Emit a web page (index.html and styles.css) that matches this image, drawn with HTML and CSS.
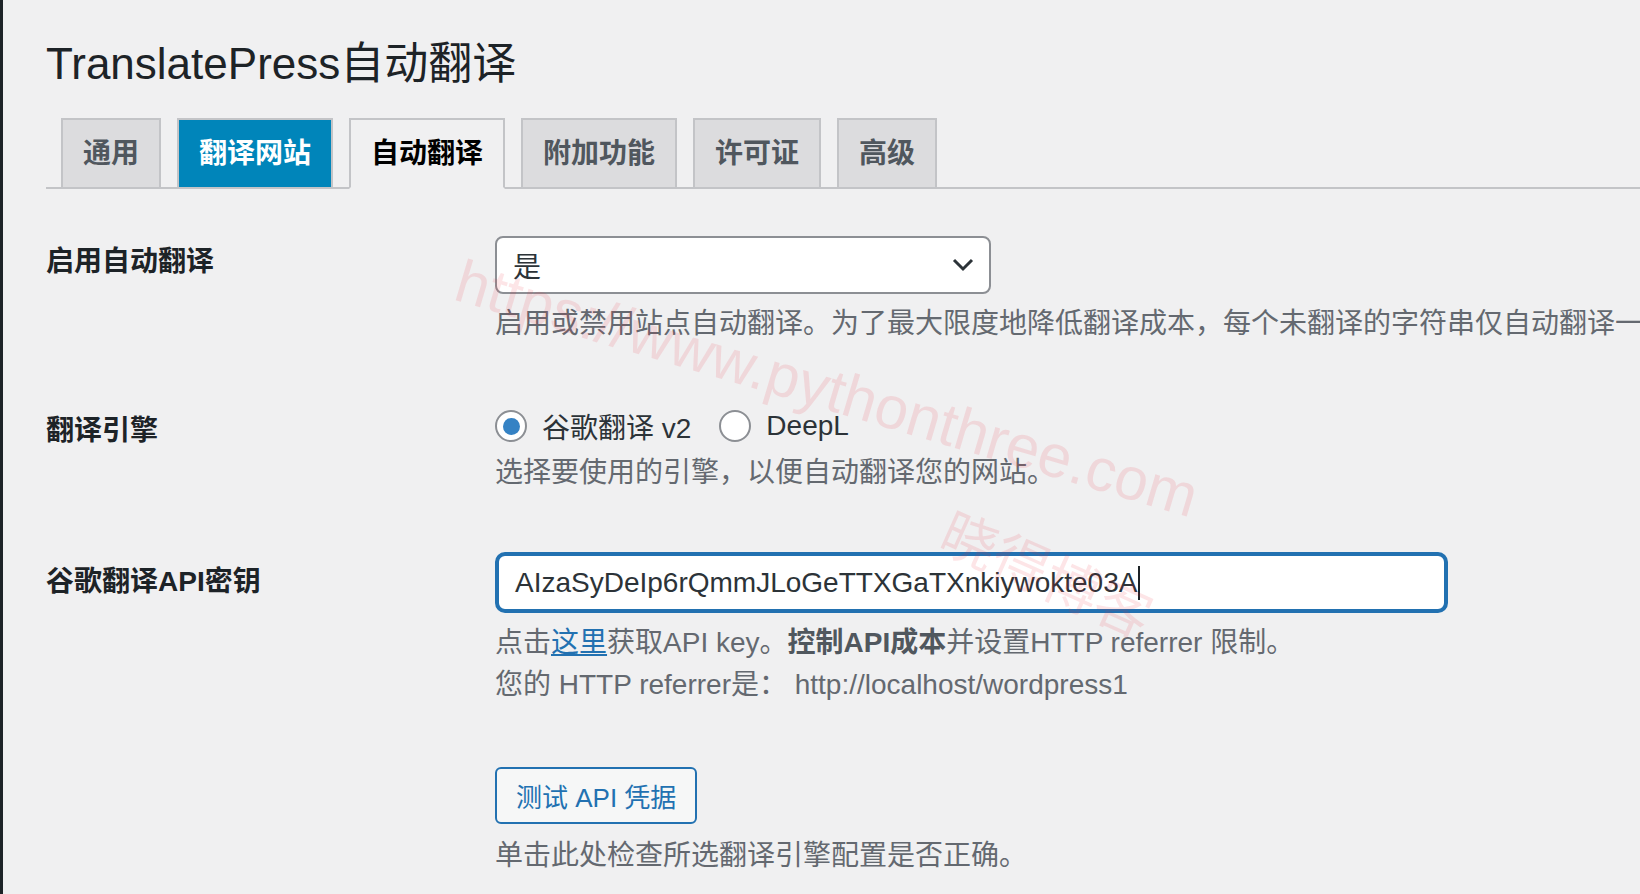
FILE: index.html
```html
<!DOCTYPE html>
<html lang="zh-CN">
<head>
  <meta charset="UTF-8" />
  <title>TranslatePress自动翻译</title>
  <link rel="stylesheet" href="styles.css">
</head>
<body>

<div class="page">
  <h1 class="page-title">TranslatePress自动翻译</h1>

  <nav class="tabs">
    <a class="tab">通用</a>
    <a class="tab tab-blue">翻译网站</a>
    <a class="tab tab-active">自动翻译</a>
    <a class="tab">附加功能</a>
    <a class="tab">许可证</a>
    <a class="tab">高级</a>
  </nav>

  <!-- Enable -->
  <div class="row row-enable">
    <div class="row-label">启用自动翻译</div>
    <div class="row-field">
      <div class="select">
        <span>是</span>
        <svg width="24" height="14" viewBox="0 0 24 14"><path d="M3 2 L12 11 L21 2" fill="none" stroke="#2c3338" stroke-width="3"/></svg>
      </div>
      <p class="desc">启用或禁用站点自动翻译。为了最大限度地降低翻译成本，每个未翻译的字符串仅自动翻译一次，然后存储在数据库中。</p>
    </div>
  </div>

  <!-- Engine -->
  <div class="row row-engine">
    <div class="row-label">翻译引擎</div>
    <div class="row-field">
      <div class="radios">
        <label class="radio-item"><span class="radio radio-checked"></span>谷歌翻译 v2</label>
        <label class="radio-item"><span class="radio"></span>DeepL</label>
      </div>
      <p class="desc desc-tight">选择要使用的引擎，以便自动翻译您的网站。</p>
    </div>
  </div>

  <!-- API key -->
  <div class="row row-key">
    <div class="row-label">谷歌翻译API密钥</div>
    <div class="row-field">
      <div class="text-input">AIzaSyDeIp6rQmmJLoGeTTXGaTXnkiywokte03A<span class="caret"></span></div>
      <p class="desc">点击<a href="#" class="link">这里</a>获取API key。<strong>控制API成本</strong>并设置HTTP referrer 限制。</p>
      <p class="desc desc-flat">您的 HTTP referrer是：&nbsp;http://localhost/wordpress1</p>

      <button class="test-btn">测试 API 凭据</button>
      <p class="desc desc-btn">单击此处检查所选翻译引擎配置是否正确。</p>
    </div>
  </div>
</div>

<div class="watermark watermark-url">https://www.pythonthree.com</div>
<div class="watermark watermark-name">晓得博客</div>

</body>
</html>
```

FILE: styles.css
```css
html, body {
  margin: 0;
  height: 100%;
  overflow: hidden;
}

body {
  background: #f0f0f1;
  font-family: "Liberation Sans", "Noto Sans CJK SC", sans-serif;
  color: #1d2327;
  position: relative;
}

.page {
  min-height: 100%;
  border-left: 3px solid #1d2327;
  padding-left: 43px;
  box-sizing: border-box;
}

.page-title {
  margin: 0;
  padding-top: 34px;
  font-size: 44px;
  font-weight: 400;
  line-height: 60px;
  color: #1d2327;
}

/* tabs */
.tabs {
  display: flex;
  gap: 16px;
  margin-top: 24px;
  padding-left: 15px;
  border-bottom: 2px solid #c3c4c7;
}

.tab {
  margin-bottom: -2px;
  padding: 10px 20px;
  line-height: 47px;
  font-size: 28px;
  font-weight: 700;
  color: #50575e;
  background: #dcdcde;
  border: 2px solid #c3c4c7;
  white-space: nowrap;
}

.tab-blue {
  background: #0085ba;
  color: #fff;
}

.tab-active {
  background: #f0f0f1;
  border-bottom-color: #f0f0f1;
  color: #000;
}

/* form rows */
.row {
  display: flex;
}

.row-label {
  width: 449px;
  flex-shrink: 0;
  padding-top: 5px;
  font-size: 28px;
  font-weight: 700;
  line-height: 42px;
  color: #1d2327;
}

.row-field {
  flex: 1;
  min-width: 0;
}

.row-enable { margin-top: 47px; }
.row-engine { margin-top: 60px; }
.row-key { margin-top: 58px; }
.row-key .row-label { padding-top: 9px; }

.select {
  width: 496px;
  height: 58px;
  box-sizing: border-box;
  display: flex;
  align-items: center;
  justify-content: space-between;
  padding: 0 14px 0 16px;
  background: #fff;
  border: 2px solid #8c8f94;
  border-radius: 8px;
  font-size: 28px;
  color: #2c3338;
}

.desc {
  margin: 9px 0 0;
  font-size: 28px;
  line-height: 42px;
  color: #646970;
  white-space: nowrap;
}

.desc-tight { margin-top: 5px; }
.desc-flat { margin-top: 0; }
.desc-btn { margin-top: 11px; }

.desc strong {
  font-weight: 700;
  color: #50575e;
}

.link {
  color: #2271b1;
  text-decoration: underline;
}

/* radios */
.radios {
  display: flex;
  align-items: center;
  height: 42px;
  font-size: 28px;
  color: #2c3338;
}

.radio-item {
  display: flex;
  align-items: center;
  margin-right: 28px;
}

.radio {
  width: 32px;
  height: 32px;
  box-sizing: border-box;
  border: 2px solid #8c8f94;
  border-radius: 50%;
  background: #fff;
  margin-right: 15px;
  display: flex;
  align-items: center;
  justify-content: center;
}

.radio-checked::before {
  content: "";
  width: 17px;
  height: 17px;
  border-radius: 50%;
  background: #3582c4;
}

/* api key input */
.text-input {
  width: 953px;
  height: 61px;
  box-sizing: border-box;
  display: flex;
  align-items: center;
  padding-left: 16px;
  background: #fff;
  border: 4px solid #2271b1;
  border-radius: 10px;
  font-size: 28px;
  color: #2c3338;
}

.caret {
  width: 2px;
  height: 34px;
  margin-left: 1px;
  background: #1d2327;
}

.test-btn {
  display: block;
  margin-top: 61px;
  height: 57px;
  padding: 0 19px;
  background: #f6f7f7;
  border: 2px solid #2271b1;
  border-radius: 6px;
  font-family: "Liberation Sans", "Noto Sans CJK SC", sans-serif;
  font-size: 26px;
  color: #2271b1;
}

/* watermark over the page */
.watermark {
  position: absolute;
  transform-origin: 0 0;
  white-space: nowrap;
  line-height: 1;
  color: rgba(235, 40, 60, 0.12);
  pointer-events: none;
}

.watermark-url {
  left: 466px;
  top: 251px;
  font-size: 60px;
  transform: rotate(16.5deg);
}

.watermark-name {
  left: 955px;
  top: 505px;
  font-size: 56px;
  transform: rotate(24deg);
}
```
